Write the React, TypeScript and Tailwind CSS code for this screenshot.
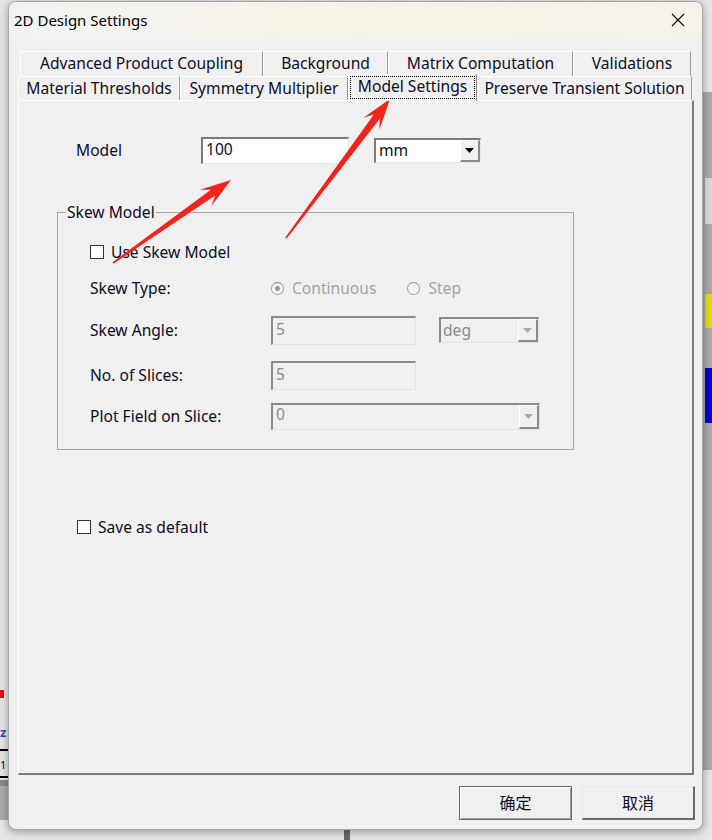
import { useMemo } from "react";

const arrowPoints = (tx: number, ty: number, px: number, py: number) => {
  const dx = px - tx;
  const dy = py - ty;
  const len = Math.sqrt(dx * dx + dy * dy);
  const ux = dx / len;
  const uy = dy / len;
  const nx = -uy;
  const ny = ux;
  const at = (x: number, y: number, a: number, w: number) =>
    `${(x - ux * a + nx * w).toFixed(1)},${(y - uy * a + ny * w).toFixed(1)}`;
  return [
    at(tx, ty, 0, 0.9),
    at(px, py, 22, 3.6),
    at(px, py, 31, 10),
    at(px, py, 0, 0),
    at(px, py, 31, -10),
    at(px, py, 22, -3.6),
    at(tx, ty, 0, -0.9),
  ].join(" ");
};

const Caret = ({ disabled }: { disabled?: boolean }) => (
  <div className="flex h-full w-[20px] items-center justify-center border-l border-t border-white border-b-2 border-r-2 border-b-[#8a8a8a] border-r-[#8a8a8a] bg-[#f0f0f0]">
    <svg width="9" height="5" viewBox="0 0 9 5">
      <path d="M0 0h9L4.5 5z" fill={disabled ? "#a8a8a8" : "#000"} />
    </svg>
  </div>
);

const Checkbox = () => (
  <div className="h-[14px] w-[14px] border border-[#333] bg-white" />
);

const Radio = ({ checked }: { checked?: boolean }) => (
  <div className="flex h-[13px] w-[13px] items-center justify-center rounded-full border border-[#a0a0a0] border-t-[#8c8c8c] bg-[#f4f4f4]">
    {checked && <div className="h-[5px] w-[5px] rounded-full bg-[#9a9a9a]" />}
  </div>
);

const App = () => {
  const a1 = useMemo(() => arrowPoints(113, 263, 231, 180), []);
  const a2 = useMemo(() => arrowPoints(286, 238, 390, 99), []);

  const row1 = [
    { label: "Advanced Product Coupling", w: "w-[243px]" },
    { label: "Background", w: "w-[125px]" },
    { label: "Matrix Computation", w: "w-[185px]" },
    { label: "Validations", w: "w-[118px]" },
  ];

  return (
    <div className="relative h-[840px] w-[712px] overflow-hidden bg-[#e6e6e6] font-['Noto_Sans','Noto_Sans_CJK_SC',sans-serif] text-[#0c0c1e]">
      {/* windows behind */}
      <div className="absolute right-0 top-[92px] h-[678px] w-[9px] bg-[#a9a9a9]">
        <div className="ml-[2px] mt-[86px] h-[46px] w-[7px] bg-[#dcdcdc]" />
        <div className="ml-[2px] mt-[70px] h-[34px] w-[7px] bg-[#e3e000]" />
        <div className="ml-[2px] mt-[40px] h-[55px] w-[7px] bg-[#0000d8]" />
      </div>
      <div className="absolute left-0 top-[690px] w-[8px]">
        <div className="h-[8px] w-[4px] bg-[#e01010]" />
        <div className="mt-[28px] text-[13px] font-bold leading-none text-[#3050c8]">z</div>
        <div className="mt-[10px] h-[2px] w-[8px] bg-black" />
        <div className="mt-[8px] text-[11px] leading-none">1</div>
        <div className="mt-[6px] h-[2px] w-[8px] bg-black" />
        <div className="mt-[2px] h-[6px] w-[8px] bg-[#8a8a8a]" />
        <div className="h-[34px] w-[8px] bg-[#ababab]" />
      </div>
      <div className="absolute bottom-0 left-[344px] h-[10px] w-[6px] bg-[#6a6a6a]" />

      {/* dialog */}
      <div className="absolute left-[8px] top-[1px] flex w-[695px] flex-col overflow-hidden rounded-[8px] border border-[#a8a8a8] bg-[#f0f0f0] shadow-[0_2px_8px_rgba(0,0,0,0.35)]">
        <div className="flex h-[36px] items-center justify-between bg-gradient-to-r from-[#f2f2f2] via-[#f6f3e6] to-[#f4f2ea] pl-[5px] pr-[17px]">
          <span className="text-[15px] text-black">2D Design Settings</span>
          <svg width="14" height="14" viewBox="0 0 14 14">
            <path d="M1 1L13 13M13 1L1 13" stroke="#111" strokeWidth="1.2" />
          </svg>
        </div>

        <div className="ml-[9px] mt-[13px] w-[676px] text-[15.6px]">
          <div className="ml-[2px] flex h-[25px]">
            {row1.map((t) => (
              <div
                key={t.label}
                className={`${t.w} flex items-center justify-center border-l border-t border-white border-r border-r-[#9a9a9a]`}
              >
                {t.label}
              </div>
            ))}
          </div>
          <div className="flex h-[24px] items-end">
            <div className="flex h-[24px] w-[162px] items-center justify-center border-l border-t border-white border-r border-r-[#9a9a9a]">
              Material Thresholds
            </div>
            <div className="flex h-[24px] w-[168px] items-center justify-center border-l border-t border-white border-r border-r-[#9a9a9a]">
              Symmetry Multiplier
            </div>
            <div className="relative z-10 -mb-[1px] flex h-[27px] w-[129px] items-center justify-center border-l border-t border-white border-r border-r-[#8a8a8a] bg-[#f0f0f0] px-[1px] pt-[1px] pb-[2px]">
              <div className="flex h-full w-full items-center justify-center border border-dotted border-black pb-[1px]">
                Model Settings
              </div>
            </div>
            <div className="flex h-[24px] w-[215px] items-center justify-center border-l border-t border-white border-r border-r-[#9a9a9a]">
              Preserve Transient Solution
            </div>
          </div>

          {/* panel */}
          <div className="flex h-[675px] flex-col border-l border-t border-white border-b-2 border-r-2 border-b-[#7c7c7c] border-r-[#7c7c7c]">
            <div className="ml-[57px] mt-[36px] flex items-center">
              <span className="w-[125px]">Model</span>
              <div className="flex h-[27px] w-[148px] items-center border-l-2 border-t-2 border-[#7a7a7a] border-b border-r border-b-[#e6e6e6] border-r-[#e6e6e6] bg-white pb-[3px] pl-[3px]">
                100
              </div>
              <div className="ml-[25px] flex h-[25px] w-[107px] items-center border-l-2 border-t-2 border-[#7a7a7a] border-b border-r border-b-[#e6e6e6] border-r-[#e6e6e6] bg-white">
                <span className="flex-1 pb-[1px] pl-[3px]">mm</span>
                <Caret />
              </div>
            </div>

            <fieldset className="ml-[38px] mt-[37px] w-[517px] border border-[#a8a8a8]">
              <legend className="ml-[8px] px-[1px]">Skew Model</legend>
              <div className="flex flex-col pl-[32px] pt-[13px] pb-[18px]">
                <div className="flex h-[30px] items-center">
                  <Checkbox />
                  <span className="ml-[7px]">Use Skew Model</span>
                </div>
                <div className="mt-[6px] flex h-[30px] items-center">
                  <span className="w-[181px]">Skew Type:</span>
                  <Radio checked />
                  <span className="ml-[8px] text-[#a3a3a3]">Continuous</span>
                  <div className="ml-[31px]">
                    <Radio />
                  </div>
                  <span className="ml-[8px] text-[#a3a3a3]">Step</span>
                </div>
                <div className="mt-[12px] flex h-[30px] items-center">
                  <span className="w-[181px]">Skew Angle:</span>
                  <div className="flex h-[29px] w-[145px] items-start border-l-2 border-t-2 border-[#8a8a8a] border-b border-r border-b-[#e3e3e3] border-r-[#e3e3e3] pl-[3px] text-[#8a8a8a]">
                    5
                  </div>
                  <div className="ml-[23px] flex h-[26px] w-[100px] items-center border-l-2 border-t-2 border-[#8a8a8a] border-b border-r border-b-[#e3e3e3] border-r-[#e3e3e3] text-[#8a8a8a]">
                    <span className="flex-1 pb-[1px] pl-[2px]">deg</span>
                    <Caret disabled />
                  </div>
                </div>
                <div className="mt-[15px] flex h-[30px] items-center">
                  <span className="w-[181px]">No. of Slices:</span>
                  <div className="flex h-[29px] w-[145px] items-start border-l-2 border-t-2 border-[#8a8a8a] border-b border-r border-b-[#e3e3e3] border-r-[#e3e3e3] pl-[3px] text-[#8a8a8a]">
                    5
                  </div>
                </div>
                <div className="mt-[11px] flex h-[30px] items-center">
                  <span className="w-[181px]">Plot Field on Slice:</span>
                  <div className="flex h-[27px] w-[269px] items-center border-l-2 border-t-2 border-[#8a8a8a] border-b border-r border-b-[#e3e3e3] border-r-[#e3e3e3] text-[#8a8a8a]">
                    <span className="-mt-[4px] flex-1 pl-[3px]">0</span>
                    <Caret disabled />
                  </div>
                </div>
              </div>
            </fieldset>

            <div className="ml-[58px] mt-[67px] flex h-[20px] items-center">
              <Checkbox />
              <span className="ml-[7px]">Save as default</span>
            </div>
          </div>
        </div>

        <div className="mb-[9px] mr-[7px] mt-[11px] flex justify-end gap-[10px]">
          <button className="h-[34px] w-[113px] border border-[#6a6a6a] bg-[#f0f0f0] text-[16px] shadow-[inset_1px_1px_0_#fff,inset_-1px_-1px_0_#9a9a9a]">
            确定
          </button>
          <button className="h-[34px] w-[113px] border-l border-t border-[#e8e8e8] border-b-2 border-r-2 border-b-[#6a6a6a] border-r-[#6a6a6a] bg-[#f0f0f0] text-[16px]">
            取消
          </button>
        </div>
      </div>

      {/* annotation arrows */}
      <svg className="pointer-events-none absolute inset-0" width="712" height="840" viewBox="0 0 712 840">
        <polygon points={a1} fill="#f2231b" />
        <polygon points={a2} fill="#f2231b" />
      </svg>
    </div>
  );
};

export default App;
